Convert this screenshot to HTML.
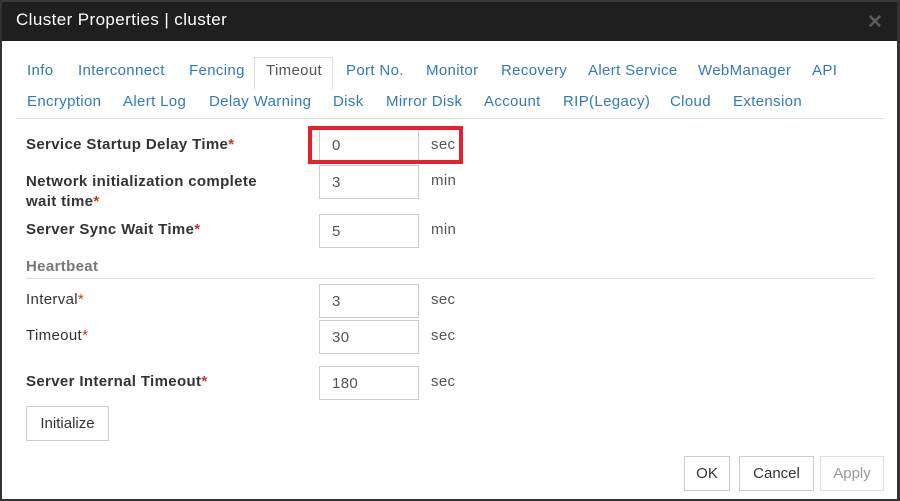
<!DOCTYPE html>
<html><head><meta charset="utf-8"><style>
*{margin:0;padding:0;box-sizing:border-box}
body{width:900px;height:501px;overflow:hidden;background:#fff;font-family:"Liberation Sans",sans-serif;font-size:15px;letter-spacing:.35px;color:#333;position:relative}
.frame{position:absolute;left:0;top:0;width:900px;height:501px;border:2px solid #333;border-top:none;border-right-width:3px}
.hdr{position:absolute;left:0;top:0;width:900px;height:41px;background:#1f1f1f;border-top:2px solid #3a3a3a}
.hdr .t{position:absolute;left:16px;top:8px;color:#fff;font-size:17px;letter-spacing:.4px}
.hdr .x{position:absolute;left:867px;top:9px;color:#5a5a5a;font-size:19px;font-weight:bold}
.a{position:absolute;white-space:nowrap}
.tab{color:#337ab7}
.tabact{position:absolute;left:254px;top:57px;width:79px;height:32px;border:1px solid #ddd;border-bottom:none;background:#fff}
.sep{position:absolute;left:16px;top:118px;width:868px;height:1px;background:#ddd}
.inp{position:absolute;left:319px;width:100px;height:34px;border:1px solid #ccc;padding:8px 12px;color:#555}
.lb{font-weight:bold;color:#333}
.st{color:#c0392b}
.u{color:#555}
.btn{position:absolute;height:35px;border:1px solid #ccc;background:#fff;text-align:center;line-height:33px;color:#333;letter-spacing:0}
</style></head><body>
<div class="hdr"><span class="t">Cluster Properties | cluster</span><span class="x">✕</span></div>
<div class="tabact"></div>
<span class="a tab" style="left:27px;top:62px">Info</span>
<span class="a tab" style="left:78px;top:62px">Interconnect</span>
<span class="a tab" style="left:189px;top:62px">Fencing</span>
<span class="a" style="left:266px;top:62px;color:#555">Timeout</span>
<span class="a tab" style="left:346px;top:62px">Port No.</span>
<span class="a tab" style="left:426px;top:62px">Monitor</span>
<span class="a tab" style="left:501px;top:62px">Recovery</span>
<span class="a tab" style="left:588px;top:62px">Alert Service</span>
<span class="a tab" style="left:698px;top:62px">WebManager</span>
<span class="a tab" style="left:812px;top:62px">API</span>
<span class="a tab" style="left:27px;top:93px">Encryption</span>
<span class="a tab" style="left:123px;top:93px">Alert Log</span>
<span class="a tab" style="left:209px;top:93px">Delay Warning</span>
<span class="a tab" style="left:333px;top:93px">Disk</span>
<span class="a tab" style="left:386px;top:93px">Mirror Disk</span>
<span class="a tab" style="left:484px;top:93px">Account</span>
<span class="a tab" style="left:563px;top:93px">RIP(Legacy)</span>
<span class="a tab" style="left:670px;top:93px">Cloud</span>
<span class="a tab" style="left:733px;top:93px">Extension</span>
<div class="sep"></div>

<span class="a lb" style="left:26px;top:136px">Service Startup Delay Time<span class="st">*</span></span>
<div class="inp" style="top:128px">0</div><span class="a u" style="left:431px;top:136px">sec</span>
<div class="a" style="left:308px;top:126px;width:155px;height:38px;border:4px solid #e8202a"></div>

<span class="a lb" style="left:26px;top:172px;line-height:20px">Network initialization complete<br>wait time<span class="st">*</span></span>
<div class="inp" style="top:165px">3</div><span class="a u" style="left:431px;top:172px">min</span>

<span class="a lb" style="left:26px;top:221px">Server Sync Wait Time<span class="st">*</span></span>
<div class="inp" style="top:214px">5</div><span class="a u" style="left:431px;top:221px">min</span>

<span class="a" style="left:26px;top:258px;color:#777;font-weight:bold">Heartbeat</span>
<div class="a" style="left:26px;top:278px;width:848px;height:1px;background:#ddd"></div>

<span class="a" style="left:26px;top:291px">Interval<span class="st">*</span></span>
<div class="inp" style="top:284px">3</div><span class="a u" style="left:431px;top:291px">sec</span>
<span class="a" style="left:26px;top:327px">Timeout<span class="st">*</span></span>
<div class="inp" style="top:320px">30</div><span class="a u" style="left:431px;top:327px">sec</span>

<span class="a lb" style="left:26px;top:373px">Server Internal Timeout<span class="st">*</span></span>
<div class="inp" style="top:366px">180</div><span class="a u" style="left:431px;top:373px">sec</span>

<div class="btn" style="left:26px;top:406px;width:83px">Initialize</div>
<div class="btn" style="left:684px;top:456px;width:46px">OK</div>
<div class="btn" style="left:739px;top:456px;width:75px">Cancel</div>
<div class="btn" style="left:820px;top:456px;width:64px;color:#999;border-color:#ddd">Apply</div>
<div class="frame"></div>
</body></html>
